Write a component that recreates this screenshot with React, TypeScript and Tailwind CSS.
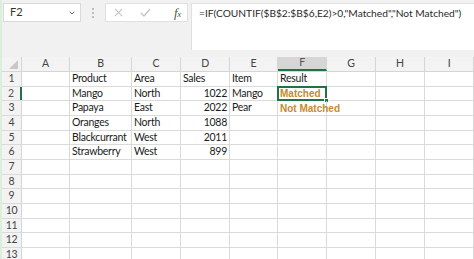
import { ChevronDown } from 'lucide-react';

const cols = ['A', 'B', 'C', 'D', 'E', 'F', 'G', 'H', 'I'];
const widths = ['w-[48px]', 'w-[62px]', 'w-[49px]', 'w-[49px]', 'w-[48px]', 'w-[49px]', 'w-[49px]', 'w-[49px]', 'w-[49px]'];

type Cell = { text: string; align?: 'right'; bold?: boolean };

const data: Record<number, Record<string, Cell>> = {
    1: { B: { text: 'Product' }, C: { text: 'Area' }, D: { text: 'Sales' }, E: { text: 'Item' }, F: { text: 'Result' } },
    2: { B: { text: 'Mango' }, C: { text: 'North' }, D: { text: '1022', align: 'right' }, E: { text: 'Mango' }, F: { text: 'Matched', bold: true } },
    3: { B: { text: 'Papaya' }, C: { text: 'East' }, D: { text: '2022', align: 'right' }, E: { text: 'Pear' }, F: { text: 'Not Matched', bold: true } },
    4: { B: { text: 'Oranges' }, C: { text: 'North' }, D: { text: '1088', align: 'right' } },
    5: { B: { text: 'Blackcurrant' }, C: { text: 'West' }, D: { text: '2011', align: 'right' } },
    6: { B: { text: 'Strawberry' }, C: { text: 'West' }, D: { text: '899', align: 'right' } },
};

const rows = Array.from({ length: 13 }, (_, i) => i + 1);

const App = () => {
    return (
        <div className="w-[474px] h-[259px] overflow-hidden bg-[#f1f1f1] font-['Lato','Noto_Sans',sans-serif] text-[10.5px] tracking-[-0.25px] text-[#222] border-l-[2px] border-[#dcefdc]">
            {/* formula bar */}
            <div className="flex items-start h-[57px] pt-[3px] pl-[1px]">
                <div className="shrink-0 w-[78px] h-[19px] bg-white border border-[#d9d9d9] flex items-center justify-between pl-[6px] pr-[4px]">
                    <span className="text-[11px] tracking-normal text-[#333]">F2</span>
                    <ChevronDown className="w-[8px] h-[8px] text-[#666]" strokeWidth={3} />
                </div>
                <div className="shrink-0 w-[24px] h-[19px] flex items-center justify-center">
                    <div className="flex flex-col gap-[2px]">
                        <span className="w-[2px] h-[2px] bg-[#bdbdbd]" />
                        <span className="w-[2px] h-[2px] bg-[#bdbdbd]" />
                        <span className="w-[2px] h-[2px] bg-[#bdbdbd]" />
                    </div>
                </div>
                <div className="shrink-0 w-[83px] h-[19px] bg-white border border-[#e0e0e0] flex items-center pl-[8px] pr-[6px]">
                    <svg width="9" height="9" viewBox="0 0 10 10" className="mr-[17px]">
                        <path d="M1 1 L9 9 M9 1 L1 9" stroke="#c4c4c4" strokeWidth="1.3" />
                    </svg>
                    <svg width="11" height="9" viewBox="0 0 11 9">
                        <path d="M1 5 L4 8 L10 1" stroke="#c4c4c4" strokeWidth="1.3" fill="none" />
                    </svg>
                    <span className="ml-auto font-['Liberation_Serif',serif] italic text-[13px] text-[#555] leading-none">
                        f<span className="text-[9px]">x</span>
                    </span>
                </div>
                <div className="ml-[3px] flex-1 min-w-0 overflow-hidden h-[47px] bg-white border-l border-t border-[#e0e0e0] pl-[7px] pt-[2px] text-[10.2px] tracking-normal text-[#2a2a2a] whitespace-nowrap">
                    =IF(COUNTIF($B$2:$B$6,E2)&gt;0,"Matched","Not Matched")
                </div>
            </div>

            {/* grid */}
            <div className="flex flex-col">
                <div className="flex h-[15px] bg-[#f3f3f3] border-b border-[#d5d5d5]">
                    <div className="w-[20px] border-r border-[#d5d5d5] relative">
                        <svg width="9" height="9" viewBox="0 0 9 9" className="absolute right-[3px] bottom-[2px]">
                            <path d="M9 0 L9 9 L0 9 Z" fill="#c8c8c8" />
                        </svg>
                    </div>
                    {cols.map((c, i) => (
                        <div
                            key={c}
                            className={`${widths[i]} flex items-center justify-center border-r border-[#d5d5d5] ${
                                c === 'F' ? 'bg-[#d6d6d6] text-[#555] border-b-[2px] border-b-[#217346]' : 'text-[#444]'
                            }`}
                        >
                            {c}
                        </div>
                    ))}
                </div>
                {rows.map((r) => (
                    <div key={r} className="flex h-[14.67px] bg-white border-b border-[#dadada]">
                        <div
                            className={`w-[20px] flex items-center justify-center border-r bg-[#f3f3f3] ${
                                r === 2 ? 'bg-[#d6d6d6] text-[#555] border-r-[2px] border-r-[#217346]' : 'border-[#d5d5d5] text-[#444]'
                            }`}
                        >
                            {r}
                        </div>
                        {cols.map((c, i) => {
                            const cell = data[r]?.[c];
                            const selected = r === 2 && c === 'F';
                            return (
                                <div
                                    key={c}
                                    className={`${widths[i]} relative flex items-center px-[2px] border-r border-[#dadada] whitespace-nowrap ${
                                        cell?.align === 'right' ? 'justify-end' : ''
                                    }`}
                                >
                                    {cell && (
                                        <span
                                            className={
                                                cell.bold
                                                    ? "font-['Liberation_Sans',Arial,sans-serif] text-[10px] tracking-normal font-bold text-[#c68a30] relative z-10"
                                                    : 'text-[#1a1a1a]'
                                            }
                                        >
                                            {cell.text}
                                        </span>
                                    )}
                                    {selected && (
                                        <>
                                            <div className="absolute -left-[1px] -top-[1px] -right-[1px] -bottom-[1px] border-[2px] border-[#217346]" />
                                            <div className="absolute -right-[3px] -bottom-[3px] w-[5px] h-[5px] bg-[#217346] border border-white" />
                                        </>
                                    )}
                                </div>
                            );
                        })}
                    </div>
                ))}
            </div>
        </div>
    );
};

export default App;
